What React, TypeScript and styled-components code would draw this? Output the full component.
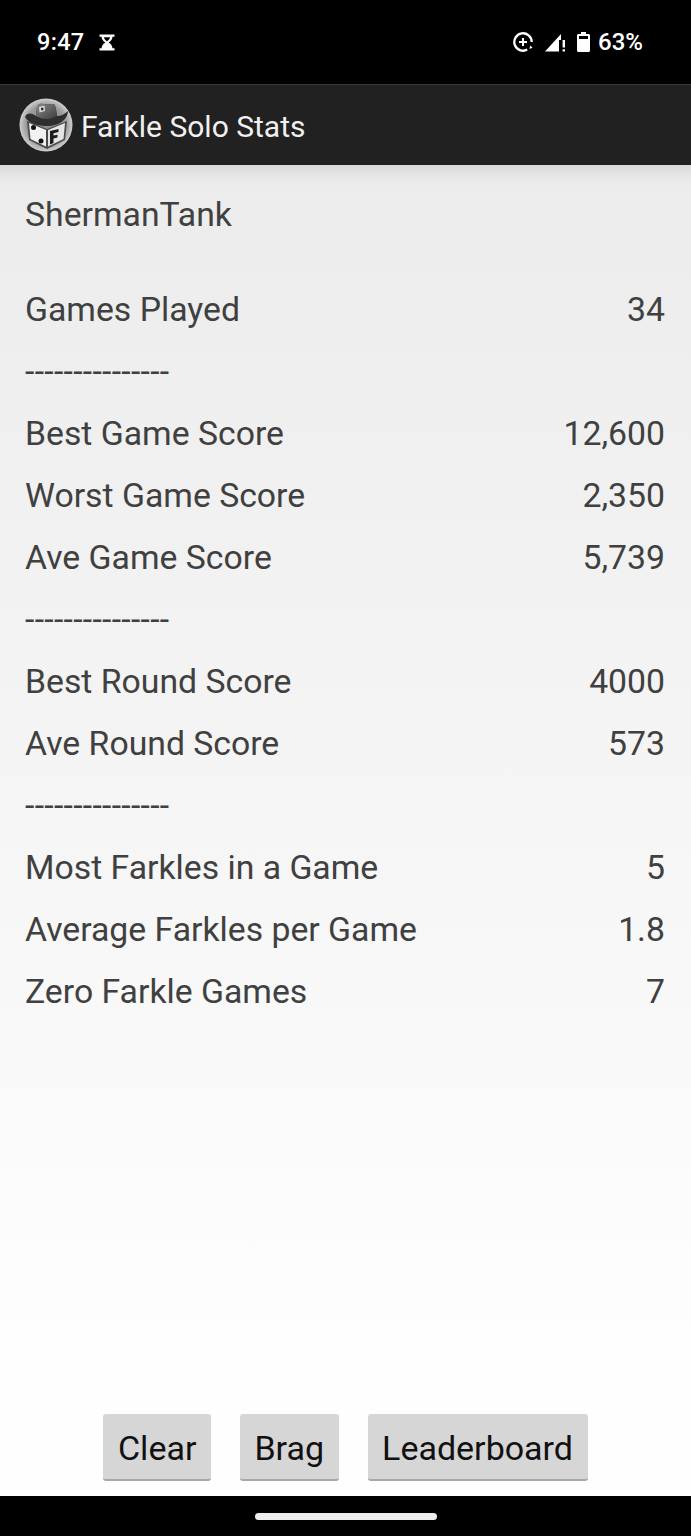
import React from 'react';
import styled, { createGlobalStyle } from 'styled-components';

const stats = [
  { label: 'Games Played', value: '34' },
  null,
  { label: 'Best Game Score', value: '12,600' },
  { label: 'Worst Game Score', value: '2,350' },
  { label: 'Ave Game Score', value: '5,739' },
  null,
  { label: 'Best Round Score', value: '4000' },
  { label: 'Ave Round Score', value: '573' },
  null,
  { label: 'Most Farkles in a Game', value: '5' },
  { label: 'Average Farkles per Game', value: '1.8' },
  { label: 'Zero Farkle Games', value: '7' },
];

const AppIcon = () => (
  <svg width="54" height="54" viewBox="0 0 54 54">
    <defs>
      <radialGradient id="disc" cx="50%" cy="50%" r="50%">
        <stop offset="0%" stopColor="#8a8a8a" />
        <stop offset="75%" stopColor="#9a9a9a" />
        <stop offset="100%" stopColor="#cfcfcf" />
      </radialGradient>
      <linearGradient id="crown" x1="0" y1="0" x2="1" y2="1">
        <stop offset="0%" stopColor="#8a8a8a" />
        <stop offset="100%" stopColor="#3d3d3d" />
      </linearGradient>
    </defs>
    <circle cx="27" cy="27" r="26.5" fill="url(#disc)" />
    <path d="M8 23 L28 31 L48 23 L46 42 L28 51 L10 42 Z" fill="#4a4a4a" />
    <path d="M10 25 L27 32 L27 48.5 L11.5 41 Z" fill="#f2f2f2" />
    <path d="M29 32 L46 25 L44.5 41 L29 48.5 Z" fill="#e4e4e4" />
    <circle cx="14.5" cy="29.5" r="2.5" fill="#111" />
    <circle cx="22" cy="43" r="2.5" fill="#111" />
    <path d="M31 33 L39.5 31 L39.5 34 L34.5 35.2 L34.5 37.6 L38.5 36.8 L38.5 39.6 L34.5 40.4 L34.5 45 L31 46.5 Z" fill="#1c1c1c" />
    <path d="M6 19 C8 14 13 15 17 18 L18 9 C19 6 22 5 24 6 C27 7 31 6 34 6 C36 6 37 9 38 18 C42 18 46 16 49 13 C49 20 42 27 31 28 C21 28.5 10 26 6 19 Z" fill="#2e2e2e" />
    <path d="M18 9 C19 6 22 5 24 6 C27 7 31 6 34 6 C36 6 37 9 38 18 C32 22 24 22 17 18 Z" fill="url(#crown)" />
    <path d="M20 9 L25.5 7.5 L26 13 L20.5 14.5 Z" fill="#d8d8d8" />
    <path d="M22 10 L24.2 9.5 L24.5 12 L22.3 12.5 Z" fill="#222" />
  </svg>
);

const App = () => (
  <Page>
    <GlobalStyle />
    <StatusBar>
      <StatusGroup>
        <Clock>9:47</Clock>
        <svg width="16" height="17" viewBox="0 0 16 16" preserveAspectRatio="none">
          <path d="M0.5 0.5H15.5V2.5H13.5C13.3 5.2 11.6 6.8 9.6 8C11.6 9.2 13.3 10.8 13.5 13.5H15.5V15.5H0.5V13.5H2.5C2.7 10.8 4.4 9.2 6.4 8C4.4 6.8 2.7 5.2 2.5 2.5H0.5Z M5 3C5.2 4.6 6.4 5.8 8 6.8C9.6 5.8 10.8 4.6 11 3Z" fill="#fff" fillRule="evenodd" />
        </svg>
      </StatusGroup>
      <StatusIcons>
        <svg width="20" height="20" viewBox="0 0 20 20">
          <path d="M14.2 17.6A8.7 8.7 0 1 1 18.7 10" fill="none" stroke="#fff" strokeWidth="2.3" />
          <path d="M10 6V14M6 10H14" stroke="#fff" strokeWidth="2" />
          <path d="M17.2 13.5L19.6 15.8L16.4 17Z" fill="#fff" />
        </svg>
        <svg width="20" height="20" viewBox="0 0 20 20">
          <path d="M0 19.5L16 2V8H14V19.5Z" fill="#fff" />
          <path d="M17.6 8H20V15.5H17.6ZM17.6 17.2H20V19.5H17.6Z" fill="#fff" />
        </svg>
        <svg width="13" height="20" viewBox="0 0 13 20">
          <path d="M4 0H9V2H11.5C12.3 2 13 2.7 13 3.5V18.5C13 19.3 12.3 20 11.5 20H1.5C0.7 20 0 19.3 0 18.5V3.5C0 2.7 0.7 2 1.5 2H4ZM2 4V7H11V4Z" fill="#fff" fillRule="evenodd" />
        </svg>
        <Percent>63%</Percent>
      </StatusIcons>
    </StatusBar>
    <TitleBar>
      <AppIcon />
      <Title>Farkle Solo Stats</Title>
    </TitleBar>
    <Content>
      <Player>ShermanTank</Player>
      {stats.map((stat, i) =>
        stat ? (
          <Row key={i}>
            <span>{stat.label}</span>
            <span>{stat.value}</span>
          </Row>
        ) : (
          <Divider key={i}>---------------</Divider>
        ),
      )}
    </Content>
    <ButtonBar>
      <Button>Clear</Button>
      <Button>Brag</Button>
      <Button>Leaderboard</Button>
    </ButtonBar>
    <NavBar>
      <HomeHandle />
    </NavBar>
  </Page>
);

export default App;

const GlobalStyle = createGlobalStyle`
  body {
    margin: 0;
    background: #000;
    font-family: Roboto, "Liberation Sans", sans-serif;
  }
`;

const Page = styled.div`
  width: 691px;
  height: 1536px;
  display: flex;
  flex-direction: column;
  overflow: hidden;
`;

const StatusBar = styled.div`
  height: 84px;
  flex-shrink: 0;
  display: flex;
  justify-content: space-between;
  align-items: center;
  padding: 0 48px 0 37px;
  background: #000;
  color: #fff;
`;

const StatusGroup = styled.div`
  display: flex;
  align-items: center;
  gap: 15px;
`;

const Clock = styled.span`
  font-size: 23.5px;
  font-weight: 500;
  letter-spacing: 0.3px;
`;

const StatusIcons = styled.div`
  display: flex;
  align-items: center;
  gap: 12px;
`;

const Percent = styled.span`
  font-size: 24px;
  font-weight: 500;
  margin-left: -4px;
`;

const TitleBar = styled.div`
  height: 81px;
  flex-shrink: 0;
  box-sizing: border-box;
  display: flex;
  align-items: center;
  gap: 8px;
  padding: 0 0 0 19px;
  background: #212121;
  border-top: 1px solid #3c3c3c;
`;

const Title = styled.h1`
  margin: 2px 0 0;
  font-size: 30px;
  font-weight: 400;
  color: #f0f0f0;
`;

const Content = styled.div`
  flex: 1;
  display: flex;
  flex-direction: column;
  padding: 18px 26px 0 25px;
  color: #404040;
  font-size: 33.75px;
  background: linear-gradient(#d9d9d9 0, #e9e9e9 14px, #ececec 20px, #f5f5f5 50%, #fefefe 95%);
`;

const Player = styled.div`
  height: 64px;
  line-height: 64px;
  margin-bottom: 31px;
`;

const Row = styled.div`
  height: 62px;
  display: flex;
  justify-content: space-between;
  align-items: center;
`;

const Divider = styled(Row)`
  justify-content: flex-start;
  letter-spacing: 0.3px;
`;

const ButtonBar = styled.div`
  height: 82px;
  flex-shrink: 0;
  display: flex;
  justify-content: center;
  gap: 29px;
  background: #fefefe;
`;

const Button = styled.button`
  height: 67px;
  padding: 3px 14.5px 0;
  border: none;
  border-bottom: 2px solid #a8a8a8;
  border-radius: 3px;
  background: #d6d6d6;
  color: #111;
  font-family: inherit;
  font-size: 34px;
`;

const NavBar = styled.div`
  height: 40px;
  flex-shrink: 0;
  display: flex;
  justify-content: center;
  align-items: center;
  background: #000;
`;

const HomeHandle = styled.div`
  width: 182px;
  height: 7px;
  border-radius: 4px;
  background: #eee;
`;
